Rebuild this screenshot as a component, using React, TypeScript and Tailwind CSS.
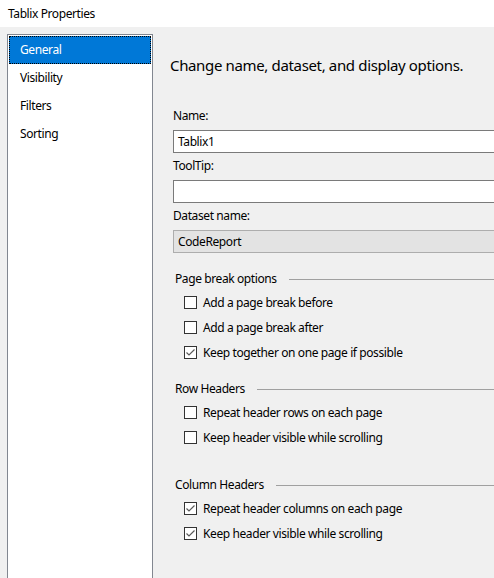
import React from "react";

const font = { fontFamily: '"Noto Sans", "Open Sans", sans-serif' };

function Check({ checked, label }: { checked?: boolean; label: string }) {
  return (
    <div className="h-[25px] flex items-center pl-[9px]">
      <div className="w-[13px] h-[13px] border border-[#333333] bg-white flex items-center justify-center shrink-0">
        {checked && (
          <svg width="11" height="11" viewBox="0 0 11 11">
            <polyline points="1.5,5.5 4,8 9.5,2.5" fill="none" stroke="#5a5a5a" strokeWidth="1.2" />
          </svg>
        )}
      </div>
      <span className="ml-[6px] text-[12px] leading-[16px] tracking-[-0.4px] text-black whitespace-nowrap">{label}</span>
    </div>
  );
}

function Group({ title }: { title: string }) {
  return (
    <div className="h-[16px] flex items-center">
      <span className="text-[12px] leading-[16px] tracking-[-0.4px] text-black whitespace-nowrap">{title}</span>
      <div className="flex-1 h-px bg-[#a0a0a0] ml-[12px]" />
    </div>
  );
}

export default function App() {
  return (
    <div className="w-[494px] h-[578px] bg-[#f0f0f0] overflow-hidden flex flex-col tracking-[-0.4px]" style={font}>
      <div className="h-[27px] bg-white flex items-center pl-[8px] text-[12px] text-black shrink-0">
        Tablix Properties
      </div>
      <div className="flex flex-1 pt-[7px] pl-[7px] min-h-0">
        <div className="w-[146px] border border-[#828790] border-b-0 bg-white p-px flex flex-col">
          <div className="h-[28px] bg-[#0078d7] border border-dotted border-black flex items-center pl-[10px] text-[12px] text-white">
            General
          </div>
          {["Visibility", "Filters", "Sorting"].map((t) => (
            <div key={t} className="h-[28px] flex items-center pl-[11px] text-[12px] text-black">
              {t}
            </div>
          ))}
        </div>
        <div className="flex-1 pl-[17px] overflow-hidden">
          <div className="mt-[20px] h-[22px] flex items-center text-[15px] tracking-[-0.35px] text-black whitespace-nowrap">
            Change name, dataset, and display options.
          </div>
          <div className="pl-[3px]">
            <div className="mt-[32px] h-[16px] text-[12px] leading-[16px] text-black">Name:</div>
            <div className="mt-[6px] w-[340px] h-[23px] border border-[#7a7a7a] bg-white flex items-center pl-[4px] text-[12px] text-black">
              Tablix1
            </div>
            <div className="mt-[5px] h-[16px] text-[12px] leading-[16px] text-black">ToolTip:</div>
            <div className="mt-[6px] w-[340px] h-[23px] border border-[#7a7a7a] bg-white" />
            <div className="mt-[5px] h-[16px] text-[12px] leading-[16px] text-black">Dataset name:</div>
            <div className="mt-[6px] w-[340px] h-[23px] border border-[#adadad] bg-[#e3e3e3] flex items-center pl-[4px] text-[12px] text-black">
              CodeReport
            </div>
          </div>
          <div className="pl-[5px]">
            <div className="mt-[18px]">
              <Group title="Page break options" />
            </div>
            <div className="mt-[3px]">
              <Check label="Add a page break before" />
              <Check label="Add a page break after" />
              <Check checked label="Keep together on one page if possible" />
            </div>
            <div className="mt-[16px]">
              <Group title="Row Headers" />
            </div>
            <div className="mt-[3px]">
              <Check label="Repeat header rows on each page" />
              <Check label="Keep header visible while scrolling" />
            </div>
            <div className="mt-[27px]">
              <Group title="Column Headers" />
            </div>
            <div className="mt-[3px]">
              <Check checked label="Repeat header columns on each page" />
              <Check checked label="Keep header visible while scrolling" />
            </div>
          </div>
        </div>
      </div>
    </div>
  );
}
